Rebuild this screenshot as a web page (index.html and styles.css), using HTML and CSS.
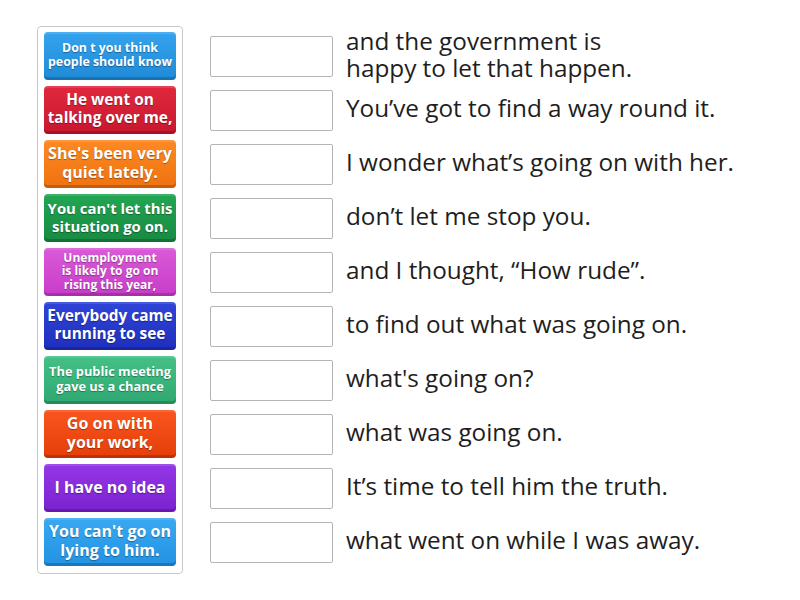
FILE: index.html
```html
<!DOCTYPE html>
<html>
<head>
<meta charset="utf-8">
<link rel="stylesheet" href="styles.css">
</head>
<body>
<div class="game">
  <div class="bank">
    <div class="tile c1 s12">Don t you think people should know</div>
    <div class="tile c2 s155">He went on talking over me,</div>
    <div class="tile c3 s16">She's been very quiet lately.</div>
    <div class="tile c4 s15">You can't let this situation go on.</div>
    <div class="tile c5 s11">Unemployment<br>is likely to go on<br>rising this year,</div>
    <div class="tile c6 s155">Everybody came running to see</div>
    <div class="tile c7 s13">The public meeting gave us a chance</div>
    <div class="tile c8 s16">Go on with<br>your work,</div>
    <div class="tile c9 s16">I have no idea</div>
    <div class="tile c10 s16">You can't go on lying to him.</div>
  </div>
  <div class="rows">
    <div class="row"><div class="slot"></div><div class="text">and the government is<br>happy to let that happen.</div></div>
    <div class="row"><div class="slot"></div><div class="text">You’ve got to find a way round it.</div></div>
    <div class="row"><div class="slot"></div><div class="text">I wonder what’s going on with her.</div></div>
    <div class="row"><div class="slot"></div><div class="text">don’t let me stop you.</div></div>
    <div class="row"><div class="slot"></div><div class="text">and I thought, “How rude”.</div></div>
    <div class="row"><div class="slot"></div><div class="text">to find out what was going on.</div></div>
    <div class="row"><div class="slot"></div><div class="text">what's going on?</div></div>
    <div class="row"><div class="slot"></div><div class="text">what was going on.</div></div>
    <div class="row"><div class="slot"></div><div class="text">It’s time to tell him the truth.</div></div>
    <div class="row"><div class="slot"></div><div class="text">what went on while I was away.</div></div>
  </div>
</div>
</body>
</html>
```
FILE: styles.css
```css
html, body {
  margin: 0;
  padding: 0;
  background: #ffffff;
}
body {
  font-family: "Open Sans", "Liberation Sans", sans-serif;
}
.game {
  display: flex;
  align-items: flex-start;
  padding: 26px 0 0 37px;
}
.bank {
  width: 132px;
  border: 1px solid #c8c8c8;
  border-radius: 4px;
  padding: 5px 6px 7px 6px;
  display: flex;
  flex-direction: column;
  gap: 6px;
}
.tile {
  height: 48px;
  box-sizing: border-box;
  border-radius: 4px;
  display: flex;
  align-items: center;
  justify-content: center;
  text-align: center;
  color: #fff;
  font-weight: 700;
  padding: 0 1px 2px;
  text-shadow: 0 1px 1px rgba(0,0,0,0.35);
  box-shadow: inset 0 -3px 0 rgba(0,0,0,0.18), inset 0 2px 0 rgba(255,255,255,0.12);
}
.s11 { font-size: 12px; line-height: 13.6px; }
.s12 { font-size: 12.4px; line-height: 14.5px; }
.s13 { font-size: 12.8px; line-height: 15px; }
.s15 { font-size: 14.9px; line-height: 18px; }
.s155 { font-size: 15.4px; line-height: 18.5px; }
.s16 { font-size: 16px; line-height: 19px; }
.c1 { background: linear-gradient(#35a3ee, #1f8ad6); }
.c2 { background: linear-gradient(#e0283e, #c8182e); }
.c3 { background: linear-gradient(#fb8a24, #ef7210); }
.c4 { background: linear-gradient(#22a653, #178a41); }
.c5 { background: linear-gradient(#da5ad8, #c83cc8); }
.c6 { background: linear-gradient(#2f44d8, #1f2fbc); }
.c7 { background: linear-gradient(#44c186, #2fa871); }
.c8 { background: linear-gradient(#fa5520, #e53e08); }
.c9 { background: linear-gradient(#9437e6, #7a22d0); }
.c10 { background: linear-gradient(#38a9f2, #2292e2); }
.rows {
  margin-left: 27px;
  margin-top: 6px;
  display: flex;
  flex-direction: column;
  gap: 6px;
}
.row {
  height: 48px;
  display: flex;
  align-items: center;
}
.slot {
  width: 121px;
  height: 39px;
  border: 1px solid #b4b4b4;
  border-radius: 2px;
  background: #fff;
  flex: none;
}
.text {
  margin-left: 13px;
  padding-bottom: 5px;
  font-size: 24.3px;
  line-height: 27px;
  color: #1e1e1e;
  white-space: nowrap;
}
```
